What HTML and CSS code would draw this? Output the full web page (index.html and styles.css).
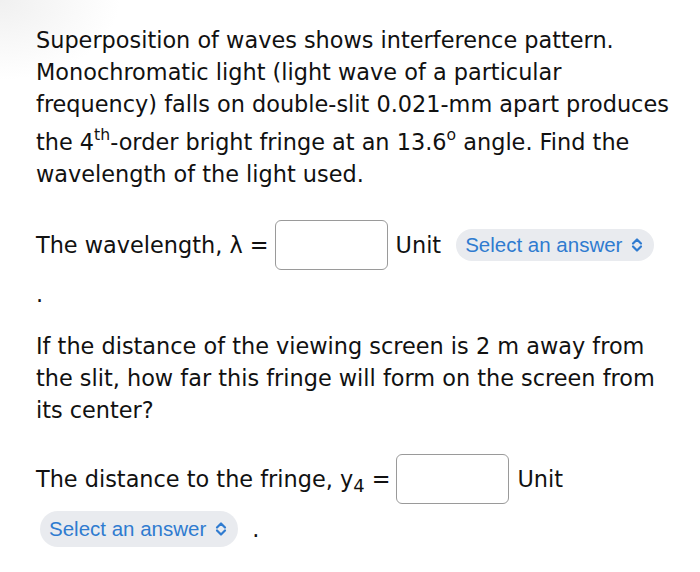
FILE: index.html
```html
<!DOCTYPE html>
<html>
<head>
<meta charset="utf-8">
<link rel="stylesheet" href="styles.css">
</head>
<body>
<div class="page">
  <p class="para">Superposition of waves shows interference pattern.<br>Monochromatic light (light wave of a particular<br>frequency) falls on double-slit 0.021-mm apart produces<br><span class="supline">the 4<sup>th</sup>-order bright fringe at an 13.6<sup>o</sup> angle. Find the</span><br>wavelength of the light used.</p>

  <div class="row row1">
    <span class="label">The wavelength, λ =</span>
    <span class="box"></span>
    <span class="unit">Unit</span>
    <span class="pill">Select an answer <svg class="chev" viewBox="0 0 14 18" width="14" height="18"><path d="M3 7.5 L7 3.5 L11 7.5 M3 10.5 L7 14.5 L11 10.5" fill="none" stroke="#2f7bd0" stroke-width="2.2" stroke-linecap="round" stroke-linejoin="round"/></svg></span>
  </div>
  <div class="dotline">.</div>

  <p class="para para2">If the distance of the viewing screen is 2 m away from<br>the slit, how far this fringe will form on the screen from<br>its center?</p>

  <div class="row row2">
    <span class="label">The distance to the fringe, y<sub>4</sub> =</span>
    <span class="box"></span>
    <span class="unit">Unit</span>
  </div>
  <div class="row row3">
    <span class="pill">Select an answer <svg class="chev" viewBox="0 0 14 18" width="14" height="18"><path d="M3 7.5 L7 3.5 L11 7.5 M3 10.5 L7 14.5 L11 10.5" fill="none" stroke="#2f7bd0" stroke-width="2.2" stroke-linecap="round" stroke-linejoin="round"/></svg></span>
    <span class="enddot">.</span>
  </div>
</div>
</body>
</html>
```

FILE: styles.css
```css
html, body {
  margin: 0;
  padding: 0;
  background: #ffffff;
}
body {
  background: radial-gradient(ellipse 120px 80px at 0 0, #f0f0f0 0%, #ffffff 100%);
  min-height: 572px;
}
.page {
  padding: 24px 0 0 36px;
  font-family: "DejaVu Sans", sans-serif;
  font-size: 22.4px;
  color: #111;
}
.para {
  margin: 0;
  line-height: 32px;
  white-space: nowrap;
}
.para sup {
  font-size: 0.7em;
  vertical-align: 0.62em;
  line-height: 0;
}
.supline {
  display: inline-block;
  padding-top: 6px;
}
.row {
  display: flex;
  align-items: center;
  white-space: nowrap;
}
.row1 {
  margin-top: 29px;
  height: 51px;
}
.box {
  display: inline-block;
  width: 111px;
  height: 48px;
  border: 1.5px solid #9a9a9a;
  border-radius: 6px;
  background: #fff;
  margin-left: 6px;
}
.unit {
  margin-left: 8px;
}
.pill {
  display: inline-flex;
  align-items: center;
  gap: 8px;
  height: 32px;
  padding: 0 10px 0 9px;
  border-radius: 16px;
  background: #e9ebef;
  color: #2f7bd0;
  font-family: "Liberation Sans", Arial, sans-serif;
  font-size: 20.5px;
}
.row1 .pill {
  margin-left: 15px;
}
.dotline {
  line-height: 32px;
  margin-top: 8px;
  height: 32px;
}
.para2 {
  margin-top: 20px;
}
.row2 {
  margin-top: 27px;
  height: 51px;
}
.row2 .box {
  margin-left: 6px;
}
.row2 sub {
  font-size: 0.8em;
  vertical-align: -0.3em;
  line-height: 0;
}
.row3 {
  margin-top: 7px;
  height: 36px;
}
.row3 .pill {
  margin-left: 4px;
  height: 36px;
  border-radius: 18px;
}
.enddot {
  margin-left: 14px;
}
```
